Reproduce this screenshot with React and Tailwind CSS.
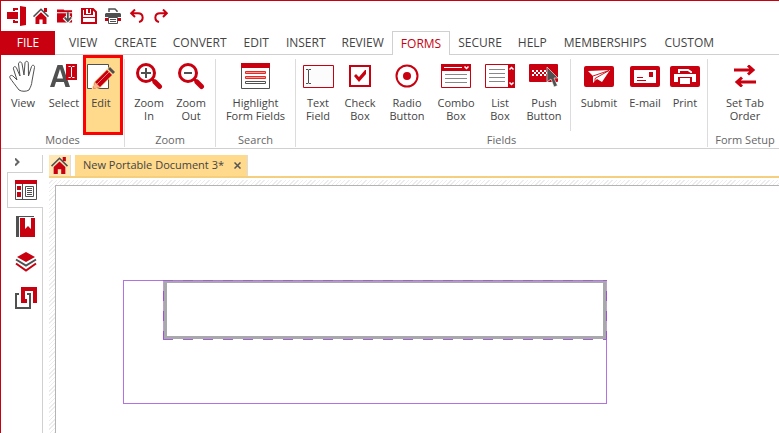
const RED = '#c8000f';
const DARK = '#505050';

const LOGO = (
  <svg width="20" height="20" viewBox="0 0 20 20" fill={RED}>
    <path d="M13 0l6 1v18l-6 1z" />
    <path d="M0 6h11v7H0z" />
    <path d="M6 4V2h5v2H8v1H6zM6 14h2v1h3v2H6z" />
  </svg>
);

function House({ size = 16 }) {
  return (
    <svg width={size} height={size} viewBox="0 0 16 16">
      <path d="M11 0h3v4h-3z" fill={RED} />
      <path d="M2.500 9.500L8 4.200l5.500 5.300V16H9.600v-4.500H6.400V16H2.500z" fill={RED} />
      <path d="M.5 8.600L8 1.200l7.500 7.400" fill="none" stroke={DARK} strokeWidth="1.500" />
    </svg>
  );
}

const FOLDER = (
  <svg width="17" height="16" viewBox="0 0 17 16">
    <path d="M0 1h7l1 1h8v2H0zM0 5h16v10H0z" fill={RED} />
    <path d="M11.500 5v8M7.500 9.500l4 4 4-4" fill="none" stroke="#fff" strokeWidth="4" />
    <path d="M11.500 4v9M8 9.500l3.500 4 3.500-4" fill="none" stroke={DARK} strokeWidth="2" />
  </svg>
);

const SAVE = (
  <svg width="16" height="16" viewBox="0 0 16 16">
    <path d="M1 1h11l3 3v11H1z" fill="#fff" stroke={RED} strokeWidth="2" />
    <path d="M4 1h7v5H4z" fill="#fff" />
    <path d="M3 1h2v6H3zM10 1h2v6h-2zM3 6h9v1H3zM7 1h2v4H7z" fill={RED} />
    <path d="M2 9.500h12" stroke={RED} strokeWidth="1" />
  </svg>
);

const PRINTER = (
  <svg width="16" height="16" viewBox="0 0 16 16">
    <path d="M4 4V1h6l2 2v1" fill="none" stroke={DARK} strokeWidth="1.500" />
    <path d="M1 5h14l1 1v3H0V6z" fill={DARK} />
    <path d="M0 10h16v3H0z" fill={RED} />
    <path d="M3.500 9.500h9v6h-9z" fill="#fff" stroke={DARK} />
    <path d="M5 11.500h6M5 13.500h6" stroke={DARK} />
  </svg>
);

function Turn({ flip }) {
  return (
    <svg width="14" height="14" viewBox="0 0 14 14" fill="none" stroke={RED} strokeWidth="2">
      <g transform={flip ? 'matrix(-1 0 0 1 14 0)' : undefined}>
        <path d="M5 0.500L1.200 4.300 5 8M1.500 4.300H8c6 0 6 7.500 1 8.700" />
      </g>
    </svg>
  );
}

const HAND = (
  <svg width="28" height="32" viewBox="0 0 28 32" fill="#fff" stroke={DARK} strokeWidth="1">
    <path d="M10 30C7 26 3 21 1 18c-1-2 1-3.500 3-2l4 4L4.500 9c-.7-2.500 2-3.300 3-1L11 16 9.500 4c0-2.500 3-2.800 3.500-.3L15 15l1-12c.3-2.300 3.300-2.200 3.300.2L19.500 16l3-9.500c.8-2.100 3.500-1.300 3 .9L23 21c-.3 4-1.500 6-3 9-2.500 1.700-7.500 1.700-10 0z" />
  </svg>
);

const SELECT = (
  <svg width="28" height="26" viewBox="0 0 28 26">
    <path d="M0 24L7.500 2h5L20 24h-4.500l-1.600-5H6L4.400 24zM7 15.500h6L10 6z" fill={DARK} fillRule="evenodd" />
    <path d="M16 1h11v16H16z" fill={RED} />
    <path d="M18.500 3.500h2l1 1 1-1h2M21.500 4.500v9M18.500 14.500h2l1-1 1 1h2" fill="none" stroke="#fff" />
  </svg>
);

const EDIT = (
  <svg width="30" height="30" viewBox="0 0 30 30">
    <path d="M1.500 2.500h21v24h-21z" fill="#fff" stroke={DARK} />
    <path d="M5 29l3-9L23 5l6 6-15 15z" fill="#ffd98c" />
    <path d="M7 27l2-7L21 8l5 5-12 12z" fill={RED} />
    <path d="M7 27l2-7 5 5z" fill="#f6b98c" />
    <path d="M22 7l2-2 5 5-2 2z" fill={DARK} />
    <path d="M11 22L23 10" stroke="#e98078" />
  </svg>
);

function Magnifier({ plus }) {
  return (
    <svg width="28" height="28" viewBox="0 0 28 28" fill="none">
      <circle cx="11" cy="11" r="8.500" stroke={RED} strokeWidth="3" />
      <path d="M17 17l3 3" stroke={RED} strokeWidth="3" />
      <path d="M20 20l4.500 4.500" stroke={RED} strokeWidth="5" strokeLinecap="round" />
      <path d={plus ? 'M6 11h10M11 6v10' : 'M7 11h8'} stroke={DARK} strokeWidth="2" />
    </svg>
  );
}

const HIGHLIGHT = (
  <svg width="29" height="26" viewBox="0 0 29 26" fill="none">
    <path d="M.5.500h28v25H.5z" stroke={DARK} />
    <path d="M0 0h29v5H0z" fill={RED} />
    <path d="M4.500 8.500h20v2h-20zM4.500 13.500h20v2h-20z" fill="#f99" stroke="#e8281e" />
    <path d="M4.500 18.500h20v2h-20z" stroke={DARK} />
  </svg>
);

const TEXT_FIELD = (
  <svg width="31" height="23" viewBox="0 0 31 23" fill="none">
    <path d="M.5.500h30v22H.5z" fill="#fcfcfc" stroke={RED} />
    <path d="M3 4.500h2l.5.500.5-.5h2M5.500 5v13M3 18.500h2l.5-.5.5.500h2" stroke={DARK} />
  </svg>
);

const CHECK = (
  <svg width="22" height="22" viewBox="0 0 22 22" fill="none">
    <path d="M1 1h20v20H1z" stroke={RED} strokeWidth="2" />
    <path d="M5 11l2-2 3 3 6-7h1v4l-7 8z" fill={RED} />
  </svg>
);

const RADIO = (
  <svg width="24" height="24" viewBox="0 0 24 24">
    <circle cx="12" cy="12" r="10.500" fill="none" stroke={RED} strokeWidth="2" />
    <circle cx="12" cy="12" r="4" fill={RED} />
  </svg>
);

const COMBO = (
  <svg width="30" height="24" viewBox="0 0 30 24" fill="none">
    <path d="M.5.500h29v23H.5z" stroke={RED} />
    <path d="M0 0h30v7H0z" fill={RED} />
    <path d="M3 3.500h18" stroke="#fff" />
    <path d="M23.500 2.500l2 2 2-2" stroke="#fff" strokeWidth="1.500" />
    <path d="M4 10.500h22M4 14.500h22M4 18.500h22" stroke="#888" />
  </svg>
);

const LIST = (
  <svg width="30" height="24" viewBox="0 0 30 24" fill="none">
    <path d="M.5.500h29v23H.5z" stroke={RED} />
    <path d="M23 0h7v24h-7z" fill={RED} />
    <path d="M24.500 5.500l2-2 2 2M24.500 18.500l2 2 2-2" stroke="#fff" strokeWidth="1.500" />
    <path d="M4 5.500h16M4 9.500h16M4 13.500h16M4 17.500h16" stroke="#888" />
  </svg>
);

const PUSH = (
  <svg width="30" height="26" viewBox="0 0 30 26">
    <rect y="1" width="29" height="18" rx="1" fill={RED} />
    <path d="M3 8h15M3 12h15" stroke="#fff" strokeWidth="2" strokeDasharray="2 2" />
    <path d="M5 10h13" stroke="#fff" strokeWidth="2" strokeDasharray="2 2" />
    <path d="M18 4v15l4-3 3 8 3.500-1.500-3.500-7.500h4z" fill={DARK} stroke="#fff" strokeWidth=".6" />
  </svg>
);

const SUBMIT = (
  <svg width="30" height="21" viewBox="0 0 30 21">
    <rect width="30" height="21" rx="2" fill={RED} />
    <path d="M4 5l22-1-8 12-5-3-4 4v-7z" fill="#fff" />
    <path d="M9 10L25 4.500 11 12.500V16" fill="none" stroke={RED} strokeWidth=".9" />
  </svg>
);

const EMAIL = (
  <svg width="30" height="21" viewBox="0 0 30 21">
    <rect width="30" height="21" rx="2" fill={RED} />
    <path d="M4 4h22v13H4z" fill="#fff" />
    <path d="M19 6h4v5h-4zM7 11h6v1H7zM7 14h9v1H7z" fill={RED} />
  </svg>
);

const PRINT = (
  <svg width="30" height="21" viewBox="0 0 30 21">
    <rect width="30" height="21" rx="2" fill={RED} />
    <path d="M9 7V4h9l3 2v1" fill="none" stroke="#fff" strokeWidth="2" />
    <path d="M4 8h22v8H4z" fill="#fff" />
    <path d="M8 11h14v8H8z" fill={RED} />
    <path d="M10 12h10v6H10z" fill="#fff" />
  </svg>
);

const TAB_ORDER = (
  <svg width="22" height="22" viewBox="0 0 22 22" fill="none" stroke={RED} strokeWidth="3">
    <path d="M0 5h19M14 .5L19 5l-5 4.500M22 17H3M8 12.500L3 17l5 4.500" />
  </svg>
);

const PAGES = (
  <svg width="22" height="20" viewBox="0 0 22 20" fill="none">
    <path d="M.5.500h21v19H.5zM7.500 4v15" stroke={DARK} />
    <path d="M0 0h22v4H0zM2 6h4v4H2zM2 12h4v5H2z" fill={RED} />
    <path d="M10.500 6.500h8v10h-8z" stroke={DARK} />
    <path d="M12 8.500h5M12 10.500h5M12 12.500h5M12 14.500h5" stroke={DARK} />
  </svg>
);

const BOOKMARK = (
  <svg width="20" height="22" viewBox="0 0 20 22">
    <path d="M0 1h18v1H3v20H0z" fill={DARK} />
    <path d="M4 3h15v19H4z" fill={RED} />
    <path d="M9 3h6v11l-3-3-3 3z" fill="#fff" />
  </svg>
);

const LAYERS = (
  <svg width="22" height="20" viewBox="0 0 22 20" fill="none">
    <path d="M2 5l9-5 9 5-9 5z" fill={RED} />
    <path d="M1 7.500l10 6 10-6" stroke={DARK} strokeWidth="2" />
    <path d="M1 11.500l10 7 10-7" stroke={RED} strokeWidth="2" />
  </svg>
);

const ATTACH = (
  <svg width="22" height="22" viewBox="0 0 22 22" fill="none">
    <path d="M4 7H1v14h14V7h-3" stroke={DARK} strokeWidth="2" />
    <path d="M6 0h16v16h-4V4h-8v8h2v4H6z" fill={RED} />
  </svg>
);

const QUICK = [
  { label: 'Home', icon: <House /> },
  { label: 'Open', icon: FOLDER },
  { label: 'Save', icon: SAVE },
  { label: 'Print document', icon: PRINTER },
  { label: 'Undo', icon: <Turn /> },
  { label: 'Redo', icon: <Turn flip /> },
];

const TABS = [
  { name: 'VIEW', pad: 'px-[9px]' },
  { name: 'CREATE', pad: 'px-2' },
  { name: 'CONVERT', pad: 'px-2' },
  { name: 'EDIT', pad: 'px-[9px]' },
  { name: 'INSERT', pad: 'px-2' },
  { name: 'REVIEW', pad: 'px-2' },
  { name: 'FORMS', pad: 'px-2', active: true },
  { name: 'SECURE', pad: 'px-2' },
  { name: 'HELP', pad: 'px-2' },
  { name: 'MEMBERSHIPS', pad: 'px-[9px]' },
  { name: 'CUSTOM', pad: 'px-[9px]' },
];

const PANELS = [
  { label: 'Bookmarks', icon: BOOKMARK },
  { label: 'Layers', icon: LAYERS },
  { label: 'Attachments', icon: ATTACH },
];

function Tool({ icon, label, className = 'w-10' }) {
  return (
    <button type="button" className={`flex shrink-0 flex-col items-center pt-px ${className}`}>
      <span className="flex h-10 items-center justify-center">{icon}</span>
      <span className="whitespace-pre text-center leading-[13px]">{label}</span>
    </button>
  );
}

function Group({ name, className = '', children }) {
  return (
    <section className={`flex shrink-0 flex-col ${className}`}>
      <div className="flex h-[76px]">{children}</div>
      <h2 className="pt-0.5 text-center leading-[14px] text-[#666]">{name}</h2>
    </section>
  );
}

function Divider() {
  return <div className="mt-1 w-px shrink-0 bg-[#dcdcdc]" />;
}

export default function App() {
  return (
    <div className="flex min-h-screen flex-col overflow-hidden border-l border-t border-[#c8000f] bg-white font-['Open_Sans',sans-serif] text-[11px] text-[#444]">
      <div className="flex h-[30px] items-center gap-1.5 pl-1.5">
        {LOGO}
        <div className="flex items-center gap-2">
          {QUICK.map((q) => (
            <button key={q.label} type="button" aria-label={q.label} className="flex w-4 justify-center">
              {q.icon}
            </button>
          ))}
        </div>
      </div>

      <nav className="flex h-6 items-stretch text-xs">
        <button type="button" className="w-[54px] bg-[#c8000f] text-white">FILE</button>
        <div className="flex flex-1 border-b border-[#d0d0d0] pl-[5px]">
          {TABS.map((tab) => (
            <button
              key={tab.name}
              type="button"
              className={`${tab.pad} ${tab.active ? '-mb-px border border-b-0 border-[#d0d0d0] bg-white text-[#c8000f]' : ''}`}
            >
              {tab.name}
            </button>
          ))}
        </div>
      </nav>

      <div className="flex border-b border-[#d0d0d0] pb-px">
        <Group name="Modes" className="w-[123px]">
          <Tool icon={HAND} label="View" className="w-11" />
          <Tool icon={SELECT} label="Select" className="w-[38px]" />
          <button type="button" className="flex h-20 w-10 shrink-0 flex-col items-center border-[3px] border-[#f00] bg-[#ffd98c] pr-1">
            <span className="flex h-[38px] items-center">{EDIT}</span>
            <span className="leading-[13px]">Edit</span>
          </button>
        </Group>
        <Divider />
        <Group name="Zoom" className="w-[90px]">
          <Tool icon={<Magnifier plus />} label={'Zoom\nIn'} className="w-12" />
          <Tool icon={<Magnifier />} label={'Zoom\nOut'} className="w-9" />
        </Group>
        <Divider />
        <Group name="Search" className="w-[79px]">
          <Tool icon={HIGHLIGHT} label={'Highlight\nForm Fields'} className="w-[79px]" />
        </Group>
        <Divider />
        <Group name="Fields" className="w-[411px]">
          <Tool icon={TEXT_FIELD} label={'Text\nField'} className="w-11" />
          <Tool icon={CHECK} label={'Check\nBox'} className="w-10" />
          <Tool icon={RADIO} label={'Radio\nButton'} className="w-[54px]" />
          <Tool icon={COMBO} label={'Combo\nBox'} className="w-11" />
          <Tool icon={LIST} label={'List\nBox'} className="w-11" />
          <Tool icon={PUSH} label={'Push\nButton'} className="mr-1 w-11" />
          <Divider />
          <Tool icon={SUBMIT} label="Submit" className="w-14" />
          <Tool icon={EMAIL} label="E-mail" className="w-9" />
          <Tool icon={PRINT} label="Print" className="w-11" />
        </Group>
        <Divider />
        <Group name="Form Setup" className="w-[74px]">
          <Tool icon={TAB_ORDER} label={'Set Tab\nOrder'} className="w-[74px]" />
        </Group>
      </div>

      <div className="flex flex-1 pt-1.5">
        <aside className="flex w-[42px] flex-col">
          <button type="button" aria-label="Expand panels" className="h-[17px] border-r border-[#d0d0d0]">
            <svg className="ml-3.5 -mt-1" width="5" height="8" viewBox="0 0 5 8" fill="none" stroke="#666" strokeWidth="2">
              <path d="M0 0.500L3.500 4 0 7.500" />
            </svg>
          </button>
          <button type="button" aria-label="Pages" className="ml-1.5 flex h-9 items-center border border-r-0 border-[#d0d0d0] pl-[7px]">
            {PAGES}
          </button>
          <div className="flex flex-1 flex-col border-r border-[#d0d0d0] pl-3.5">
            {PANELS.map((p) => (
              <button key={p.label} type="button" aria-label={p.label} className="flex h-9 w-[22px] items-center justify-center">
                {p.icon}
              </button>
            ))}
          </div>
        </aside>

        <main className="ml-1.5 flex min-w-0 flex-1 flex-col">
          <div className="flex h-[23px] gap-1 border-b-2 border-[#f5cf7d]">
            <button type="button" aria-label="Start page" className="flex w-[22px] items-center justify-center border-r border-[#ddd] bg-[#ffe6b5]">
              <House size={17} />
            </button>
            <div className="flex items-center gap-2.5 border-r border-[#ddd] bg-[#ffd98c] pl-2 pr-1.5">
              <button type="button">New Portable Document 3*</button>
              <button type="button" aria-label="Close document">
                <svg width="7" height="7" viewBox="0 0 7 7" stroke="#555" strokeWidth="1.500">
                  <path d="M.5.500l6 6M6.500.500l-6 6" />
                </svg>
              </button>
            </div>
          </div>
          <div className="mt-0.5 flex flex-1 bg-[repeating-linear-gradient(135deg,#fff_0_2px,#ececec_2px_3px)] pl-1.5 pt-[5px]">
            <div className="flex-1 border-l border-t border-[#b4b4b4] bg-white pl-[67px] pt-[94px]">
              {/* selected field, with a dashed marquee round its text box */}
              <div className="h-[124px] w-[484px] border border-[#b272e2] pl-[39px]">
                <div className="-mr-px -mt-px h-[60px] bg-[repeating-linear-gradient(90deg,#a060d0_0_10px,transparent_10px_20px)] py-px">
                  <div className="h-full bg-[repeating-linear-gradient(180deg,#b9a6c8_0_10px,#a04fd6_10px_20px)] px-px">
                    <div className="h-full border-[3px] border-t-2 border-[#a9a9ad] bg-white" />
                  </div>
                </div>
              </div>
            </div>
          </div>
        </main>
      </div>
    </div>
  );
}
